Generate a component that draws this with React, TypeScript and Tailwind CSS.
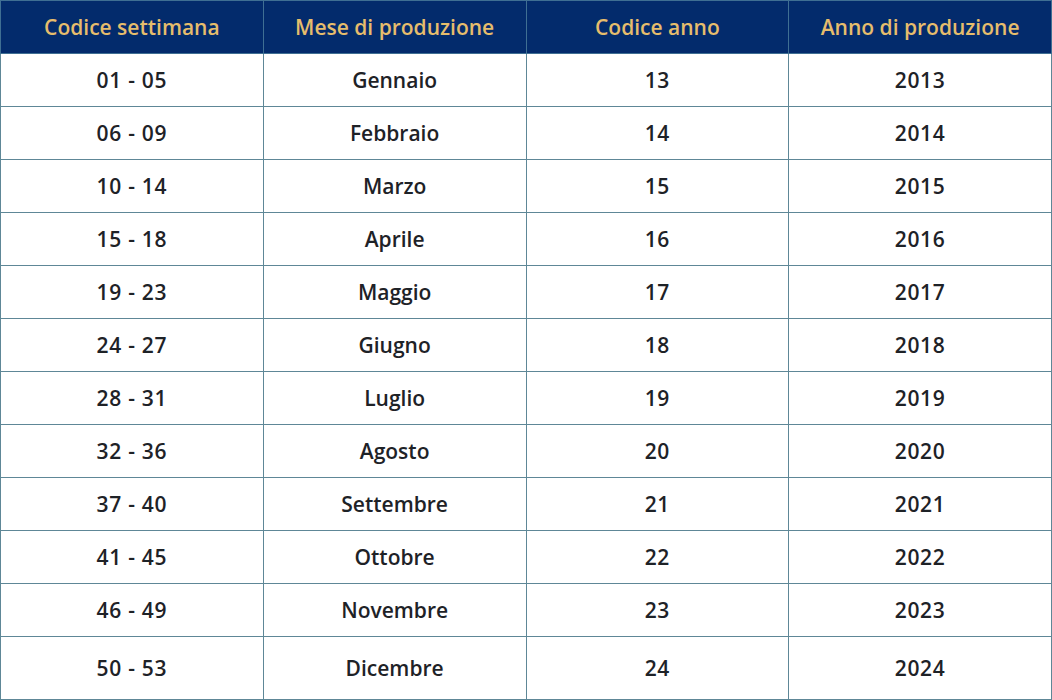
const rows = [
  ["01 - 05", "Gennaio", "13", "2013"],
  ["06 - 09", "Febbraio", "14", "2014"],
  ["10 - 14", "Marzo", "15", "2015"],
  ["15 - 18", "Aprile", "16", "2016"],
  ["19 - 23", "Maggio", "17", "2017"],
  ["24 - 27", "Giugno", "18", "2018"],
  ["28 - 31", "Luglio", "19", "2019"],
  ["32 - 36", "Agosto", "20", "2020"],
  ["37 - 40", "Settembre", "21", "2021"],
  ["41 - 45", "Ottobre", "22", "2022"],
  ["46 - 49", "Novembre", "23", "2023"],
  ["50 - 53", "Dicembre", "24", "2024"],
];

const headers = ["Codice settimana", "Mese di produzione", "Codice anno", "Anno di produzione"];

export default function App() {
  return (
    <div className="w-[1052px] h-[700px] bg-white font-['Open_Sans','Liberation_Sans',sans-serif]">
      <table className="w-full table-fixed border-collapse border border-[#5e8797] text-center">
        <thead>
          <tr className="h-[53px] bg-[#032b6c]">
            {headers.map((h) => (
              <th key={h} className="border border-[#3f6f93] pt-[2px] text-[21px] font-semibold text-[#e6bd6c]">
                {h}
              </th>
            ))}
          </tr>
        </thead>
        <tbody>
          {rows.map((r, i) => (
            <tr key={r[0]} className={i === rows.length - 1 ? "h-[63px]" : "h-[53px]"}>
              {r.map((c, j) => (
                <td
                  key={j}
                  className={
                    j === 1
                      ? "border border-[#5e8797] pt-[2px] text-[21px] font-semibold text-[#1e2227]"
                      : "border border-[#5e8797] pt-[2px] text-[21px] font-semibold tracking-[0.7px] text-[#1e2227]"
                  }
                >
                  {c}
                </td>
              ))}
            </tr>
          ))}
        </tbody>
      </table>
    </div>
  );
}
